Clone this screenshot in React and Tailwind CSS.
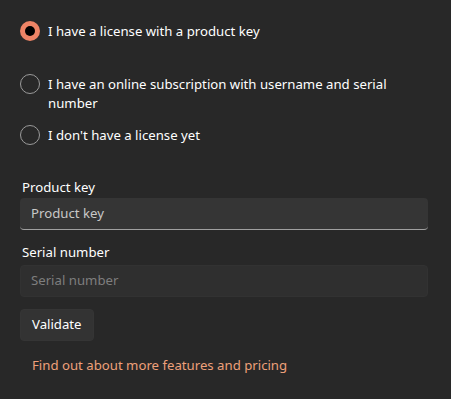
import React from "react";

function Radio({ checked, children }) {
  return (
    <label className="flex items-start gap-2">
      <span className="flex h-5 w-5 shrink-0 items-center justify-center">
        {checked ? (
          <span className="flex h-5 w-5 items-center justify-center rounded-full bg-[#ee8466]">
            <span className="h-[10px] w-[10px] rounded-full bg-black" />
          </span>
        ) : (
          <span className="h-5 w-5 rounded-full border border-[#9a9a9a]" />
        )}
      </span>
      <span className="pt-px leading-[19px] text-[#ffffff]">{children}</span>
    </label>
  );
}

export default function App() {
  return (
    <div
      className="h-[399px] w-[451px] overflow-hidden bg-[#282828] text-[13.2px] text-white"
      style={{ fontFamily: '"Noto Sans", "Open Sans", sans-serif' }}
    >
      <div className="flex flex-col pl-5 pr-[23px] pt-[21px]">
        <div className="flex flex-col">
          <Radio checked>I have a license with a product key</Radio>
          <div className="mt-[33px] pr-[17px]">
            <Radio>I have an online subscription with username and serial number</Radio>
          </div>
          <div className="mt-[12px]">
            <Radio>I don't have a license yet</Radio>
          </div>
        </div>

        <div className="mt-[33px] pl-[2px] leading-[19px]">Product key</div>
        <div className="mt-[1px] flex h-[32px] items-center rounded-[4px] border-b border-[#a0a0a0] bg-[#353535] px-[11px] text-[#c8c8c8]">
          Product key
        </div>

        <div className="mt-[13px] pl-[2px] leading-[19px]">Serial number</div>
        <div className="mt-[3px] flex h-[32px] items-center rounded-[4px] border border-[#323232] bg-[#2f2f2f] px-[10px] text-[#7e7e7e]">
          Serial number
        </div>

        <div className="mt-[12px]">
          <button className="flex h-[32px] items-center rounded-[4px] border border-[#353535] bg-[#333333] px-[11px] text-white">
            Validate
          </button>
        </div>

        <div className="mt-[15px] pl-[12px] leading-[19px] text-[#eea07a]">
          Find out about more features and pricing
        </div>
      </div>
    </div>
  );
}
